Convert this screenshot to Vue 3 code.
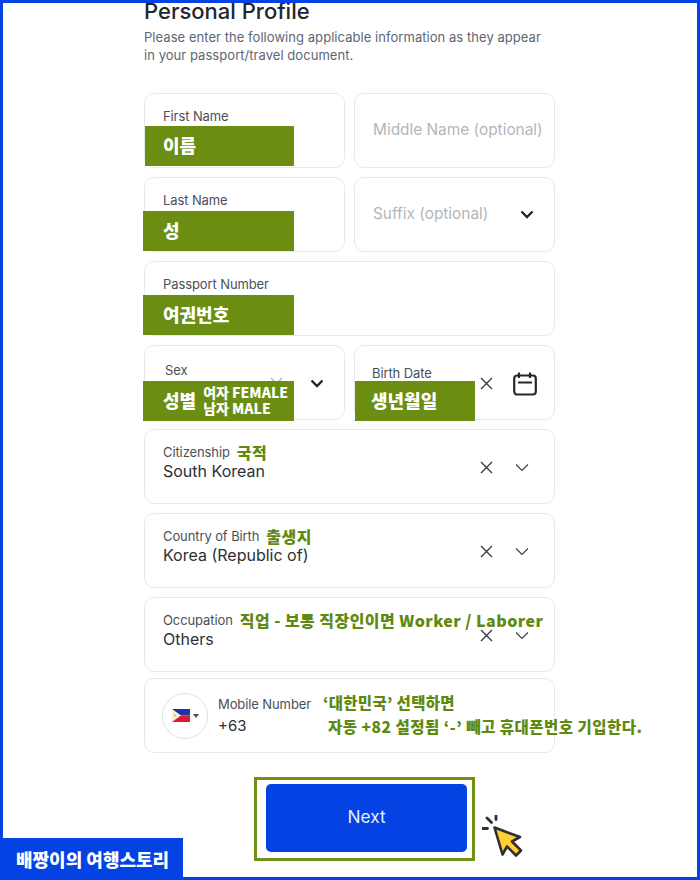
<script setup>
const xIcon = 'M1 1l11 11M12 1L1 12'
</script>

<template>
  <div class="frame">
    <div class="page">
      <h1 class="title">Personal Profile</h1>
      <p class="desc">Please enter the following applicable information as they appear<br />in your passport/travel document.</p>

      <div class="grid">
        <div class="card">
          <span class="label lab-top">First Name</span>
          <div class="mask mask-first"><span class="mask-text">이름</span></div>
        </div>
        <div class="card center">
          <span class="placeholder">Middle Name (optional)</span>
        </div>

        <div class="card">
          <span class="label lab-top">Last Name</span>
          <div class="mask mask-wide"><span class="mask-text">성</span></div>
        </div>
        <div class="card center between">
          <span class="placeholder">Suffix (optional)</span>
          <svg class="chev-bold" viewBox="0 0 14 9"><path d="M1.5 1.5L7 7l5.500-5.500" /></svg>
        </div>

        <div class="card span2">
          <span class="label lab-top">Passport Number</span>
          <div class="mask mask-wide"><span class="mask-text">여권번호</span></div>
        </div>

        <div class="card">
          <span class="label lab-sex">Sex</span>
          <svg class="x x-birth x-ghost" viewBox="0 0 13 13"><path :d="xIcon" /></svg>
          <svg class="chev-bold chev-sex" viewBox="0 0 14 9"><path d="M1.5 1.5L7 7l5.500-5.500" /></svg>
          <div class="mask mask-wide mask-sex">
            <span class="mask-text">성별</span>
            <span class="mask-small">여자 FEMALE<br />남자 MALE</span>
          </div>
        </div>
        <div class="card">
          <span class="label lab-birth">Birth Date</span>
          <svg class="x x-birth" viewBox="0 0 13 13"><path :d="xIcon" /></svg>
          <svg class="cal" viewBox="0 0 24 24">
            <rect x="1.200" y="3.500" width="21.600" height="19" rx="3" />
            <path d="M6 0.500v5.500M17 0.500v5.500M5 10.500h14" />
          </svg>
          <div class="mask mask-birth"><span class="mask-text">생년월일</span></div>
        </div>

        <div class="card span2 select">
          <div class="sel-text">
            <div class="sel-label"><span class="label">Citizenship</span><span class="note">국적</span></div>
            <div class="value">South Korean</div>
          </div>
          <svg class="x" viewBox="0 0 13 13"><path :d="xIcon" /></svg>
          <svg class="chev" viewBox="0 0 14 9"><path d="M1 1.500L7 7.500l6-6" /></svg>
        </div>

        <div class="card span2 select">
          <div class="sel-text">
            <div class="sel-label"><span class="label">Country of Birth</span><span class="note">출생지</span></div>
            <div class="value">Korea (Republic of)</div>
          </div>
          <svg class="x" viewBox="0 0 13 13"><path :d="xIcon" /></svg>
          <svg class="chev" viewBox="0 0 14 9"><path d="M1 1.500L7 7.500l6-6" /></svg>
        </div>

        <div class="card span2 select">
          <div class="sel-text">
            <div class="sel-label"><span class="label">Occupation</span><span class="note">직업 - 보통 직장인이면 Worker / Laborer</span></div>
            <div class="value">Others</div>
          </div>
          <svg class="x" viewBox="0 0 13 13"><path :d="xIcon" /></svg>
          <svg class="chev" viewBox="0 0 14 9"><path d="M1 1.500L7 7.500l6-6" /></svg>
        </div>

        <div class="card span2 phone">
          <div class="flag-btn">
            <svg class="flag" viewBox="0 0 18 13">
              <rect width="18" height="6.500" fill="#1a35a8" />
              <rect y="6.500" width="18" height="6.500" fill="#e3172b" />
              <path d="M0 0l9 6.500L0 13z" fill="#f6f1dc" />
              <circle cx="3" cy="6.500" r="1.300" fill="#f2c230" />
            </svg>
            <span class="caret"></span>
          </div>
          <div class="phone-text">
            <div class="label">Mobile Number</div>
            <div class="value phone-value">+63</div>
          </div>
          <span class="note note-a">‘대한민국’ 선택하면</span>
          <span class="note note-b">자동 +82 설정됨 ‘-’ 빼고 휴대폰번호 기입한다.</span>
        </div>
      </div>

      <div class="next-wrap">
        <div class="next-outline">
          <button class="next" type="button">Next</button>
        </div>
        <svg class="cursor" viewBox="0 0 42 42">
          <path d="M12.500 12.500L38 22l-8 4.500 9 9-5 5-9-9-4.500 8z" fill="#ffcf33" stroke="#2e2e33" stroke-width="2.600" stroke-linejoin="round" />
          <path d="M5 3l4.500 4.500M14 0.500v4M0.500 13.500h5" fill="none" stroke="#2e2e33" stroke-width="2.800" stroke-linecap="round" />
        </svg>
      </div>
    </div>

    <div class="badge">배짱이의 여행스토리</div>
  </div>
</template>

<style>
html, body { margin: 0; background: #fff; }
</style>

<style scoped>
.frame {
  position: relative;
  box-sizing: border-box;
  width: 700px;
  height: 880px;
  border: 3px solid #0442e4;
  overflow: hidden;
  background: #fff;
  font-family: Inter, "Noto Sans CJK KR", sans-serif;
  color: #2c3038;
}
.page {
  display: flex;
  flex-direction: column;
  padding-left: 141px;
  width: 411px;
}
.title {
  margin: 0;
  font-size: 22px;
  line-height: 16px;
  font-weight: 500;
  color: #23262b;
  white-space: nowrap;
}
.desc {
  margin: 9px 0 0;
  font-size: 13px;
  line-height: 18px;
  letter-spacing: 0.05px;
  color: #5e6672;
  white-space: nowrap;
}
.grid {
  display: grid;
  grid-template-columns: 201px 201px;
  grid-auto-rows: 75px;
  gap: 9px;
  margin-top: 29px;
}
.card {
  position: relative;
  box-sizing: border-box;
  border: 1px solid #e8e9ec;
  border-radius: 10px;
  background: #fff;
}
.span2 { grid-column: span 2; }
.center { display: flex; align-items: center; padding-left: 18px; }
.between { justify-content: space-between; padding-right: 20px; }
.label {
  font-size: 13px;
  line-height: 16px;
  letter-spacing: -0.1px;
  color: #4a4f58;
  white-space: nowrap;
}
.lab-top { position: absolute; left: 18px; top: 14px; }
.lab-sex { position: absolute; left: 20px; top: 16px; }
.lab-birth { position: absolute; left: 17px; top: 19px; }
.placeholder {
  font-size: 15.400px;
  color: #b4b6ba;
  white-space: nowrap;
  margin-top: -3px;
}
.mask {
  position: absolute;
  left: -2px;
  top: 33px;
  width: 151px;
  height: 40px;
  background: #6b8e12;
  display: flex;
  align-items: center;
  padding: 0 0 3px 20px;
  box-sizing: border-box;
  color: #fff;
}
.mask-first { left: 0; top: 32px; width: 149px; padding-left: 18px; }
.mask-sex { top: 35px; padding-bottom: 2px; }
.mask-birth { left: 0; top: 35px; width: 120px; padding-left: 16px; }
.mask-text {
  font-size: 18px;
  line-height: 24px;
  font-weight: 900;
  font-family: "Noto Sans CJK KR", sans-serif;
  white-space: nowrap;
}
.mask-small {
  margin-left: 7px;
  font-size: 14px;
  line-height: 16px;
  font-weight: 900;
  font-family: "Noto Sans CJK KR", sans-serif;
  white-space: nowrap;
}
.chev-bold { width: 14px; height: 9px; fill: none; stroke: #22252b; stroke-width: 2.400; }
.chev-sex { position: absolute; right: 20px; top: 33px; }
.x { width: 13px; height: 13px; fill: none; stroke: #3a3d44; stroke-width: 1.400; flex: none; }
.x-birth { position: absolute; left: 125px; top: 31px; }
.x-ghost { stroke: #b4b6ba; }
.cal {
  position: absolute;
  left: 158px;
  top: 26px;
  width: 24px;
  height: 24px;
  fill: none;
  stroke: #24272d;
  stroke-width: 2.200;
}
.select { display: flex; align-items: flex-start; padding: 13px 25px 0 18px; }
.sel-text { flex: 1; min-width: 0; }
.sel-label { display: flex; align-items: center; gap: 7px; height: 18px; white-space: nowrap; }
.note {
  color: #5e8a10;
  font-size: 16px;
  line-height: 18px;
  letter-spacing: 0.45px;
  font-weight: 900;
  font-family: "Noto Sans CJK KR", sans-serif;
  white-space: nowrap;
}
.value { font-size: 16px; line-height: 20px; color: #2c3038; white-space: nowrap; }
.select .x { margin-top: 18px; margin-right: -1px; position: relative; z-index: 1; }
.chev { width: 14px; height: 9px; fill: none; stroke: #3a3d44; stroke-width: 1.100; flex: none; margin: 20px 0 0 23px; }
.phone { display: flex; align-items: center; padding-left: 17px; margin-top: -3px; height: 75px; }
.flag-btn {
  box-sizing: border-box;
  width: 46px;
  height: 46px;
  border: 1px solid #dfe0e3;
  border-radius: 50%;
  display: flex;
  align-items: center;
  justify-content: center;
  gap: 3px;
}
.flag { width: 18px; height: 13px; }
.caret {
  width: 0;
  height: 0;
  border-left: 3.500px solid transparent;
  border-right: 3.500px solid transparent;
  border-top: 4px solid #4a4f58;
}
.phone-text { margin-left: 10px; }
.phone-value { margin-top: 4px; font-size: 15px; }
.note-a { position: absolute; left: 178px; top: 14px; font-size: 15.500px; letter-spacing: 0.3px; }
.note-b { position: absolute; left: 183px; top: 38px; font-size: 15.500px; letter-spacing: 0.5px; }
.next-wrap {
  position: relative;
  display: flex;
  margin-top: 21px;
  padding-left: 110px;
}
.next-outline {
  box-sizing: border-box;
  width: 221px;
  height: 84px;
  border: 3px solid #6f9215;
  padding: 4px 9px;
}
.next {
  display: block;
  width: 201px;
  height: 68px;
  border: 0;
  border-radius: 5px;
  background: #0442e4;
  color: #e8eefc;
  font-family: Inter, sans-serif;
  font-size: 17.300px;
  font-weight: 400;
  padding-bottom: 4px;
}
.cursor {
  position: absolute;
  left: 338px;
  top: 38px;
  width: 42px;
  height: 42px;
}
.badge {
  position: absolute;
  left: -3px;
  bottom: -3px;
  box-sizing: border-box;
  width: 183px;
  height: 42px;
  background: #0442e4;
  color: #fff;
  font-family: "Noto Sans CJK KR", sans-serif;
  font-size: 18px;
  font-weight: 900;
  line-height: 42px;
  padding-left: 16px;
  white-space: nowrap;
}
</style>
